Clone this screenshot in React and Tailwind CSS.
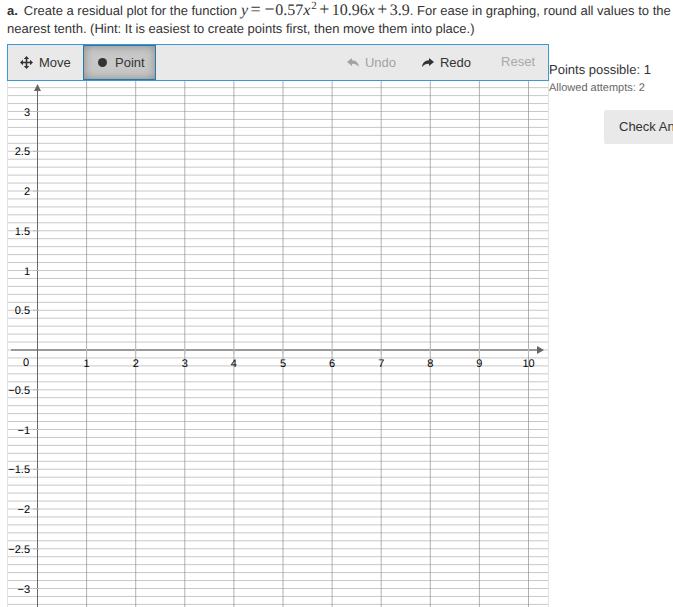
import React, { useState } from "react";

const ORIGIN_X = 29.5;
const ORIGIN_Y = 269;
const UNIT_X = 49.1;
const STEP_Y = 7.95;

const rows = Array.from({ length: 67 }, (_, i) => i - 33);
const cols = Array.from({ length: 10 }, (_, i) => i + 1);
const labels = [3, 2.5, 2, 1.5, 1, 0.5, -0.5, -1, -1.5, -2, -2.5, -3];

function Op({ children }) {
  return <span className="mx-0.5 inline-block w-[11px] text-center text-lg leading-none">{children}</span>;
}

function Formula() {
  return (
    <span className="ml-1 font-['Liberation_Serif',serif] text-base leading-none whitespace-nowrap">
      <i>y</i>
      <Op>=</Op>
      <span className="ml-px inline-block w-[11px] text-center text-lg leading-none">−</span>
      0.57<i>x</i>
      <sup className="-top-1.5 ml-px text-[11px] leading-none">2</sup>
      <Op>+</Op>
      10.96<i>x</i>
      <Op>+</Op>
      3.9
    </span>
  );
}

function MoveIcon() {
  return (
    <svg className="h-[13px] w-[13px]" viewBox="0 0 13 13" fill="#333" aria-hidden="true">
      <path d="M6.5 0 9.2 3H7.3V5.7H10V3.8L13 6.5 10 9.2V7.3H7.3V10H9.2L6.5 13 3.8 10h1.9V7.3H3V9.2L0 6.5 3 3.8v1.9h2.7V3H3.8Z" />
    </svg>
  );
}

function ArrowIcon({ flip }) {
  return (
    <svg
      className={flip ? "h-[9px] w-3 -scale-x-100" : "h-[9px] w-3"}
      viewBox="0 0 12 9"
      fill="currentColor"
      aria-hidden="true"
    >
      <path d="M7 0 12 4 7 8V5.7C4 5.6 2 6.6.1 9 .4 5 2.6 2.4 7 2.2Z" />
    </svg>
  );
}

function Graph() {
  return (
    <svg className="block h-[538px] w-full border-x border-[#e2e2e2]" role="img" aria-label="Coordinate grid">
      {rows.map((r) => (
        <line key={r} x1="0" x2="100%" y1={ORIGIN_Y - r * STEP_Y} y2={ORIGIN_Y - r * STEP_Y} stroke="#c8c8c8" />
      ))}
      {cols.map((c) => (
        <line
          key={c}
          x1={ORIGIN_X + c * UNIT_X}
          x2={ORIGIN_X + c * UNIT_X}
          y1="0"
          y2="100%"
          stroke="#909090"
          strokeOpacity="0.7"
        />
      ))}
      <line x1="3" x2="530" y1={ORIGIN_Y} y2={ORIGIN_Y} stroke="#999" strokeWidth="2" />
      <path d="M529 265 536 269 529 273Z" fill="#666" />
      <line x1="29.5" x2="29.5" y1="8" y2="100%" stroke="#666" />
      <path d="M26 10 29.5 3 33 10Z" fill="#666" />
      <g fontFamily="Liberation Sans, Arial, sans-serif" fontSize="11" fill="#000">
        {labels.map((v) => (
          <g key={v}>
            <line x1="25" x2="31" y1={ORIGIN_Y - v * 79.5} y2={ORIGIN_Y - v * 79.5} stroke="#bbb" />
            <text x="22" y={ORIGIN_Y - v * 79.5 + 4} textAnchor="end">
              {String(v).replace("-", "−")}
            </text>
          </g>
        ))}
        <text x="21" y="285" textAnchor="end">0</text>
        {cols.map((c) => (
          <g key={c}>
            <line x1={ORIGIN_X + c * UNIT_X} x2={ORIGIN_X + c * UNIT_X} y1="268" y2="273" stroke="#bbb" />
            <text x={ORIGIN_X + c * UNIT_X} y="286" textAnchor="middle">{c}</text>
          </g>
        ))}
      </g>
    </svg>
  );
}

export default function App() {
  const [tool, setTool] = useState("point");
  const on = "border-[#2779aa] bg-[#c8c8c8] shadow-[inset_0_0_10px_#888]";
  const off = "border-transparent";
  return (
    <div className="h-screen overflow-hidden bg-white font-['Liberation_Sans',Arial,sans-serif] text-[13px] text-[#333] [text-rendering:geometricPrecision]">
      <p className="pl-[7px] leading-[18px]">
        <b>a.</b>
        <span className="ml-1.5">Create a residual plot for the function</span>
        <Formula />. For ease in graphing, round all values to the nearest tenth. (Hint: It is easiest to create points
        first, then move them into place.)
      </p>
      <div className="mt-1.5 flex items-start pl-[7px]">
        <div className="w-[542px] shrink-0">
          <div className="flex h-[37px] items-stretch border border-[#3c97d6] bg-[#e9e9e9]">
            <button
              type="button"
              onClick={() => setTool("move")}
              className={`flex w-[75px] items-center gap-1.5 border pl-[11px] ${tool === "move" ? on : off}`}
            >
              <MoveIcon />
              Move
            </button>
            <button
              type="button"
              onClick={() => setTool("point")}
              className={`flex w-[73px] items-center gap-2 border pl-3.5 ${tool === "point" ? on : off}`}
            >
              <span className="size-[9px] rounded-full bg-[#333]" />
              Point
            </button>
            <div className="ml-auto flex items-center pr-[13px]">
              <button type="button" disabled className="flex items-center gap-1.5 text-[#a3a3a3]">
                <ArrowIcon flip />
                Undo
              </button>
              <button type="button" className="ml-[26px] flex items-center gap-1.5">
                <ArrowIcon />
                Redo
              </button>
              <button type="button" disabled className="ml-[30px] pb-0.5 text-[#a8a8a8]">
                Reset
              </button>
            </div>
          </div>
          <Graph />
        </div>
        <div className="shrink-0 pt-[17px]">
          <p className="leading-[18px]">Points possible: 1</p>
          <p className="text-[11px] leading-[18px] text-[#666]">Allowed attempts: 2</p>
          <button
            type="button"
            className="mt-[13px] ml-[55px] h-[34px] rounded-xs bg-[#e9e9e9] px-[15px] whitespace-nowrap"
          >
            Check Answer
          </button>
        </div>
      </div>
    </div>
  );
}
